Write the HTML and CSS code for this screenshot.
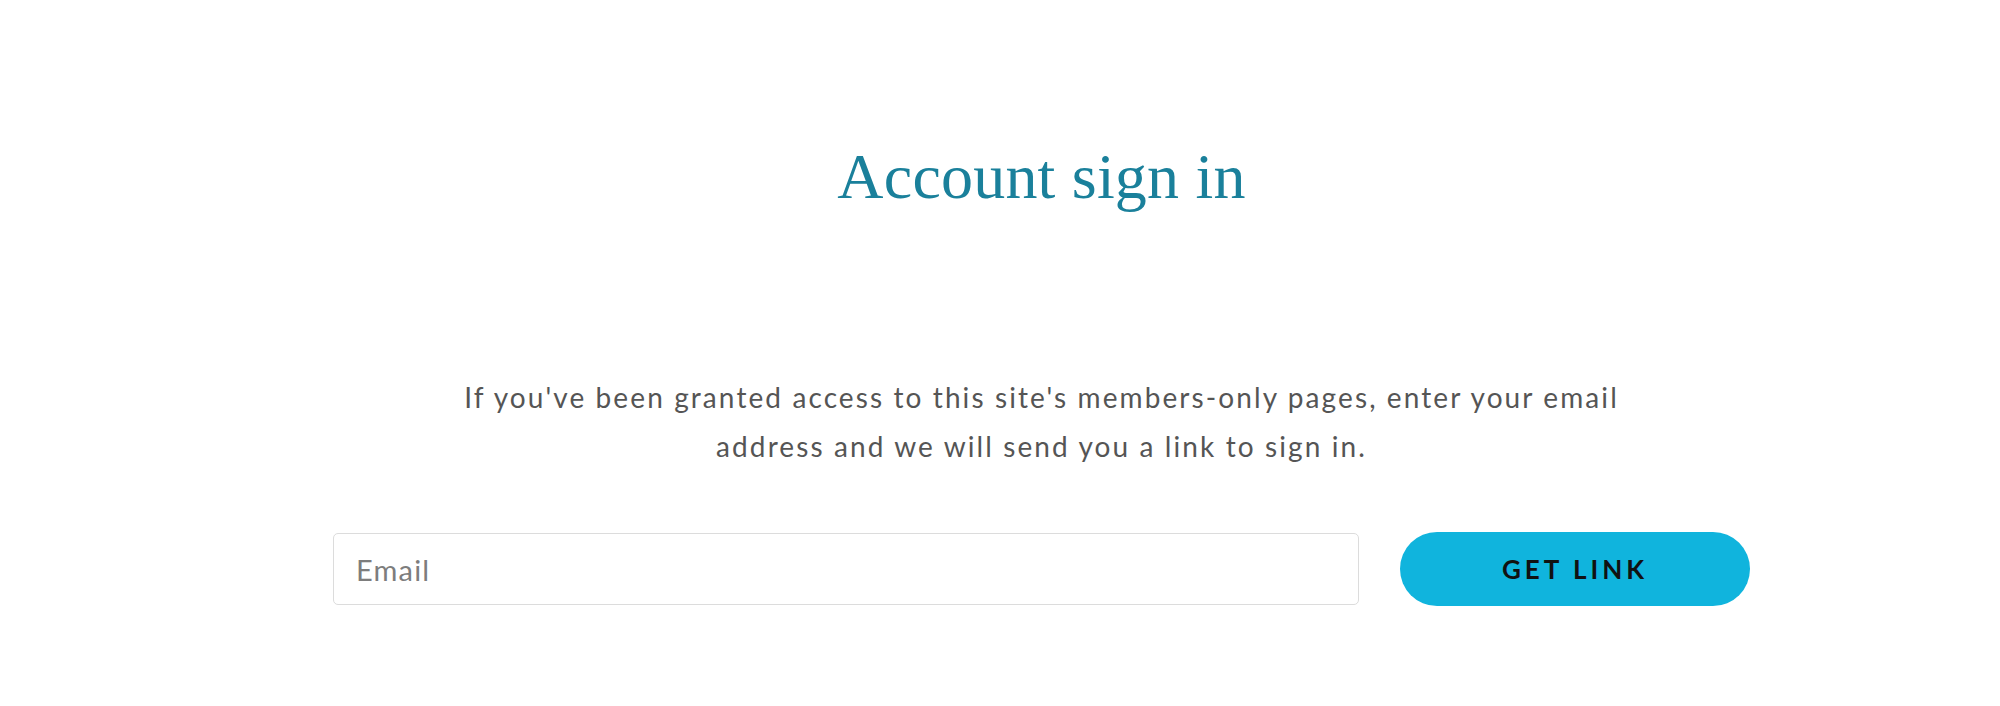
FILE: index.html
```html
<!DOCTYPE html>
<html lang="en">
<head>
    <meta charset="UTF-8">
    <meta name="viewport" content="width=device-width, initial-scale=1.0">
    <title>Account sign in</title>
    <link rel="stylesheet" href="styles.css">
</head>
<body>
    <div class="page">
        <h1 class="title">Account sign in</h1>

        <p class="intro">If you've been granted access to this site's members-only pages, enter your email address and we will send you a link to sign in.</p>

        <!-- Sign in form -->
        <form class="signin-form" onsubmit="return false;">
            <input type="email" class="email-input" placeholder="Email">
            <button type="submit" class="get-link">GET LINK</button>
        </form>
    </div>
</body>
</html>
```

FILE: styles.css
```css
/* Resetting default margin and padding */
body, html {
    margin: 0;
    padding: 0;
    background: #ffffff;
    font-family: Lato, "Open Sans", sans-serif;
}

.page {
    width: 1417px;
    padding: 138px 0 0 333px;
}

/* Page heading */
.title {
    margin: 0;
    font-family: "Liberation Serif", serif;
    font-weight: normal;
    font-size: 64px;
    line-height: 78px;
    letter-spacing: 0.2px;
    color: #1a809b;
    text-align: center;
}

/* Intro text */
.intro {
    width: 1190px;
    margin: 157px auto 61px;
    font-size: 28px;
    line-height: 49px;
    letter-spacing: 2.1px;
    color: #555555;
    text-align: center;
}

/* Form row */
.signin-form {
    display: flex;
    align-items: center;
    gap: 41px;
}

.email-input {
    box-sizing: border-box;
    width: 1026px;
    height: 72px;
    padding: 0 22px;
    border: 1px solid #dcdcdc;
    border-radius: 5px;
    font-family: Lato, sans-serif;
    font-size: 29px;
    letter-spacing: 1.2px;
    color: #333;
    outline: none;
}

.email-input::placeholder {
    color: #7d7d7d;
}

.get-link {
    width: 350px;
    height: 74px;
    border: none;
    border-radius: 37px;
    background: #10b4dd;
    color: #111111;
    font-family: Lato, sans-serif;
    font-weight: bold;
    font-size: 26px;
    letter-spacing: 4px;
    cursor: pointer;
}
```
